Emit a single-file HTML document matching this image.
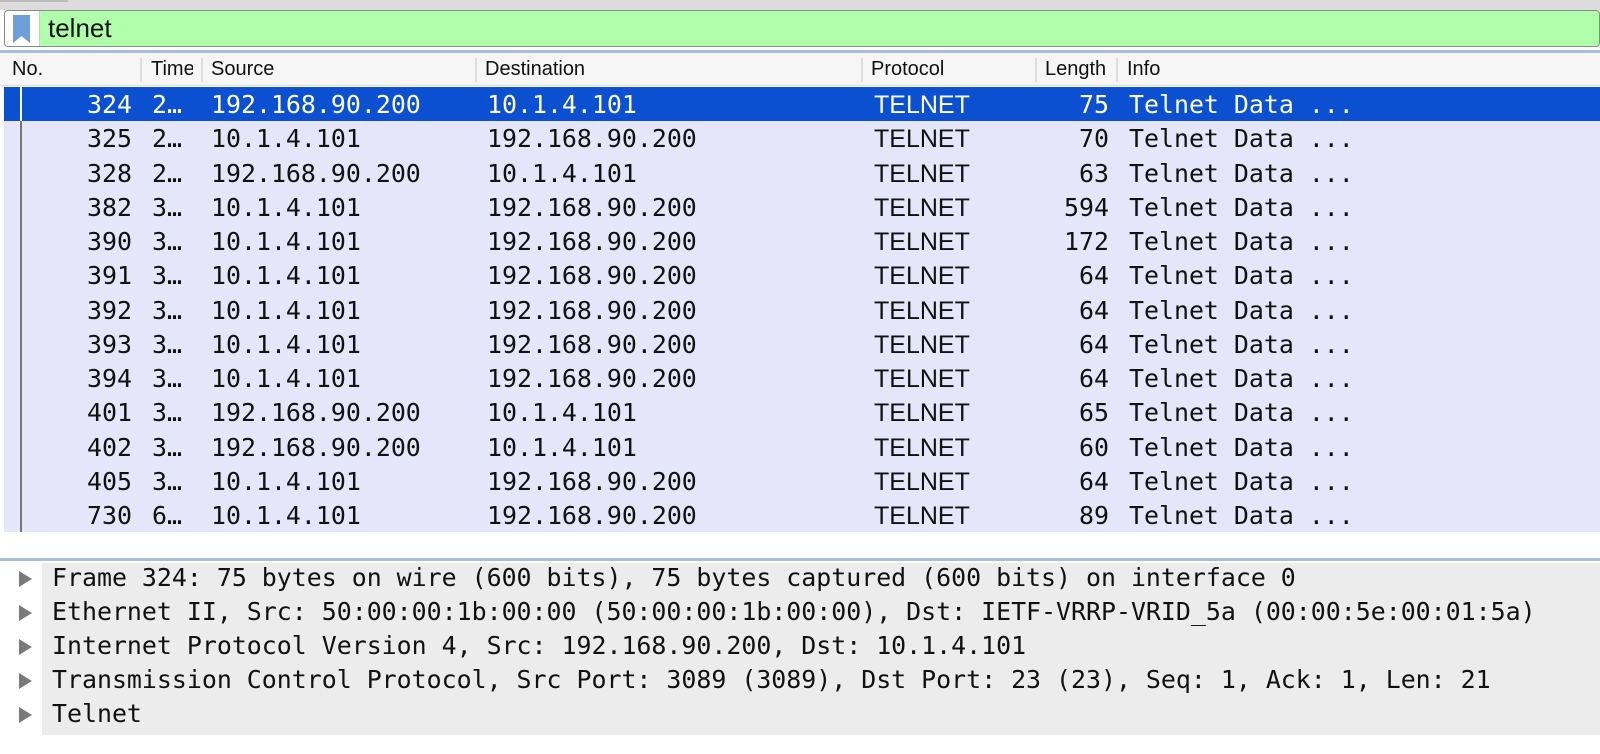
<!DOCTYPE html>
<html><head><meta charset="utf-8"><style>
*{margin:0;padding:0;box-sizing:border-box}
body{width:1600px;height:754px;background:#fff;position:relative;overflow:hidden;font-family:"DejaVu Sans Mono","Liberation Mono",monospace}
.a{position:absolute;white-space:pre}
.hdr{font-family:"Liberation Sans","DejaVu Sans",sans-serif;font-size:20px;color:#111;top:58px}
.sep{position:absolute;top:58px;width:2px;height:24px;background:#ddd}
.row{position:absolute;left:4px;width:1596px;height:34.25px;background:#e6e6fa;font-size:24.9px;color:#111}
.row.sel{background:#0b50d0;color:#fff}
.row span{position:absolute;top:3px;white-space:pre}
.row span.p{font-family:"Liberation Sans",sans-serif;font-size:25px;top:4px}
.d{position:absolute;left:52px;font-size:24.9px;color:#111;white-space:pre}
.tri{position:absolute;left:19px;width:0;height:0;border-left:13px solid #7a7a7a;border-top:8px solid transparent;border-bottom:8px solid transparent}
</style></head><body>
<div class="a" style="left:0;top:0;width:1600px;height:10px;background:#dcdcdc"></div>
<div class="a" style="left:0;top:0;width:68px;height:2px;background:#bcbcbc"></div>
<div class="a" style="left:4px;top:10px;width:1596px;height:37px;background:#b0ffaa;border:1px solid #8a8a8a;border-radius:4px;overflow:hidden">
 <div style="position:absolute;left:0;top:0;width:35px;height:35px;background:#fff;border-right:1px solid #ccc"></div>
 <svg style="position:absolute;left:8px;top:4px" width="17" height="28" viewBox="0 0 17 28"><path d="M0 0H17V28L8.5 21L0 28Z" fill="#6f9fd8"/></svg>
 <div style="position:absolute;left:43px;top:2px;font-family:'Liberation Sans',sans-serif;font-size:26px;color:#111">telnet</div>
</div>
<div class="a" style="left:0;top:50px;width:1600px;height:3px;background:#a8bfd8"></div>
<div class="a" style="left:0;top:53px;width:1600px;height:33px;background:#f6f6f6;border-bottom:1px solid #ddd"></div>
<div class="a hdr" style="left:12px">No.</div>
<div class="sep" style="left:140px"></div>
<div class="a hdr" style="left:151px;width:42px;overflow:hidden">Time</div>
<div class="sep" style="left:201px"></div>
<div class="a hdr" style="left:211px">Source</div>
<div class="sep" style="left:475px"></div>
<div class="a hdr" style="left:485px">Destination</div>
<div class="sep" style="left:861px"></div>
<div class="a hdr" style="left:871px">Protocol</div>
<div class="sep" style="left:1035px"></div>
<div class="a hdr" style="left:1045px;width:65px;overflow:hidden">Length</div>
<div class="sep" style="left:1116px"></div>
<div class="a hdr" style="left:1127px">Info</div>

<div class="a" style="left:0;top:558px;width:1600px;height:3px;background:#a8bfd8"></div>
<div class="a" style="left:0;top:561px;width:1600px;height:193px;background:#fff"></div>
<div class="a" style="left:42px;top:563px;width:1558px;height:172px;background:#ececec"></div>
<div class="tri" style="top:571px"></div>
<div class="tri" style="top:605px"></div>
<div class="tri" style="top:639px"></div>
<div class="tri" style="top:673px"></div>
<div class="tri" style="top:707px"></div>
<div class="d" style="top:563px">Frame 324: 75 bytes on wire (600 bits), 75 bytes captured (600 bits) on interface 0</div>
<div class="d" style="top:597px">Ethernet II, Src: 50:00:00:1b:00:00 (50:00:00:1b:00:00), Dst: IETF-VRRP-VRID_5a (00:00:5e:00:01:5a)</div>
<div class="d" style="top:631px">Internet Protocol Version 4, Src: 192.168.90.200, Dst: 10.1.4.101</div>
<div class="d" style="top:665px">Transmission Control Protocol, Src Port: 3089 (3089), Dst Port: 23 (23), Seq: 1, Ack: 1, Len: 21</div>
<div class="d" style="top:699px">Telnet</div>

<div class="row sel" style="top:87px"><span style="right:1468px">324</span><span style="left:148px">2…</span><span style="left:207px">192.168.90.200</span><span style="left:483px">10.1.4.101</span><span class="p" style="left:870px">TELNET</span><span style="right:491px">75</span><span style="left:1125px">Telnet Data ...</span></div>
<div class="row" style="top:121.25px"><span style="right:1468px">325</span><span style="left:148px">2…</span><span style="left:207px">10.1.4.101</span><span style="left:483px">192.168.90.200</span><span class="p" style="left:870px">TELNET</span><span style="right:491px">70</span><span style="left:1125px">Telnet Data ...</span></div>
<div class="row" style="top:155.5px"><span style="right:1468px">328</span><span style="left:148px">2…</span><span style="left:207px">192.168.90.200</span><span style="left:483px">10.1.4.101</span><span class="p" style="left:870px">TELNET</span><span style="right:491px">63</span><span style="left:1125px">Telnet Data ...</span></div>
<div class="row" style="top:189.75px"><span style="right:1468px">382</span><span style="left:148px">3…</span><span style="left:207px">10.1.4.101</span><span style="left:483px">192.168.90.200</span><span class="p" style="left:870px">TELNET</span><span style="right:491px">594</span><span style="left:1125px">Telnet Data ...</span></div>
<div class="row" style="top:224px"><span style="right:1468px">390</span><span style="left:148px">3…</span><span style="left:207px">10.1.4.101</span><span style="left:483px">192.168.90.200</span><span class="p" style="left:870px">TELNET</span><span style="right:491px">172</span><span style="left:1125px">Telnet Data ...</span></div>
<div class="row" style="top:258.25px"><span style="right:1468px">391</span><span style="left:148px">3…</span><span style="left:207px">10.1.4.101</span><span style="left:483px">192.168.90.200</span><span class="p" style="left:870px">TELNET</span><span style="right:491px">64</span><span style="left:1125px">Telnet Data ...</span></div>
<div class="row" style="top:292.5px"><span style="right:1468px">392</span><span style="left:148px">3…</span><span style="left:207px">10.1.4.101</span><span style="left:483px">192.168.90.200</span><span class="p" style="left:870px">TELNET</span><span style="right:491px">64</span><span style="left:1125px">Telnet Data ...</span></div>
<div class="row" style="top:326.75px"><span style="right:1468px">393</span><span style="left:148px">3…</span><span style="left:207px">10.1.4.101</span><span style="left:483px">192.168.90.200</span><span class="p" style="left:870px">TELNET</span><span style="right:491px">64</span><span style="left:1125px">Telnet Data ...</span></div>
<div class="row" style="top:361px"><span style="right:1468px">394</span><span style="left:148px">3…</span><span style="left:207px">10.1.4.101</span><span style="left:483px">192.168.90.200</span><span class="p" style="left:870px">TELNET</span><span style="right:491px">64</span><span style="left:1125px">Telnet Data ...</span></div>
<div class="row" style="top:395.25px"><span style="right:1468px">401</span><span style="left:148px">3…</span><span style="left:207px">192.168.90.200</span><span style="left:483px">10.1.4.101</span><span class="p" style="left:870px">TELNET</span><span style="right:491px">65</span><span style="left:1125px">Telnet Data ...</span></div>
<div class="row" style="top:429.5px"><span style="right:1468px">402</span><span style="left:148px">3…</span><span style="left:207px">192.168.90.200</span><span style="left:483px">10.1.4.101</span><span class="p" style="left:870px">TELNET</span><span style="right:491px">60</span><span style="left:1125px">Telnet Data ...</span></div>
<div class="row" style="top:463.75px"><span style="right:1468px">405</span><span style="left:148px">3…</span><span style="left:207px">10.1.4.101</span><span style="left:483px">192.168.90.200</span><span class="p" style="left:870px">TELNET</span><span style="right:491px">64</span><span style="left:1125px">Telnet Data ...</span></div>
<div class="row" style="top:498px"><span style="right:1468px">730</span><span style="left:148px">6…</span><span style="left:207px">10.1.4.101</span><span style="left:483px">192.168.90.200</span><span class="p" style="left:870px">TELNET</span><span style="right:491px">89</span><span style="left:1125px">Telnet Data ...</span></div>
<div class="a" style="left:20px;top:87px;width:2px;height:445px;background:#777"></div>
<div class="a" style="left:20px;top:87px;width:2px;height:34px;background:#fff"></div>
</body></html>
